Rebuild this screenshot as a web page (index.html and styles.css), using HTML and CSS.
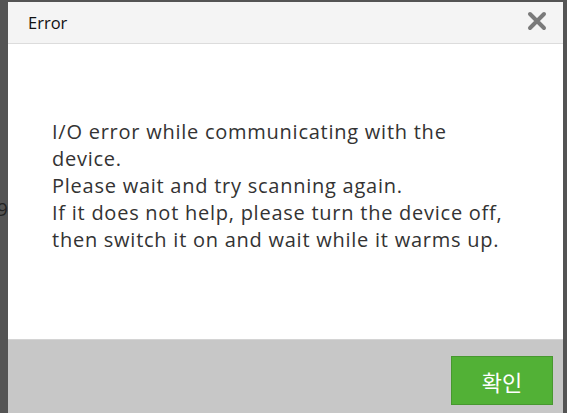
FILE: index.html
```html
<!DOCTYPE html>
<html>
<head>
<meta charset="utf-8">
<link rel="stylesheet" href="styles.css">
</head>
<body>
<div class="backdrop">
  <span class="behind">9</span>
  <div class="dialog">
    <div class="header">
      <span class="title">Error</span>
      <svg class="close" width="20" height="20" viewBox="0 0 20 20"><path d="M3 3 L17 17 M17 3 L3 17" stroke="#7a7a7a" stroke-width="4" stroke-linecap="round"/></svg>
    </div>
    <div class="content">
      <p class="msg">I/O error while communicating with the<br>device.<br>Please wait and try scanning again.<br>If it does not help, please turn the device off,<br>then switch it on and wait while it warms up.</p>
    </div>
    <div class="footer">
      <button class="ok">확인</button>
    </div>
  </div>
</div>
</body>
</html>
```
FILE: styles.css
```css
html, body {
  margin: 0;
  padding: 0;
  height: 100%;
  overflow: hidden;
}
body {
  background: #545454;
  font-family: "Open Sans", "Noto Sans CJK KR", sans-serif;
}
.backdrop {
  position: relative;
  height: 100%;
  padding: 2px 4px 0 8px;
  box-sizing: border-box;
}
.behind {
  position: absolute;
  left: -3px;
  top: 196px;
  font-size: 19px;
  color: #222;
}
.dialog {
  background: #fff;
  display: flex;
  flex-direction: column;
  height: 430px;
}
.header {
  height: 41px;
  background: #f4f4f4;
  border-bottom: 1px solid #dcdcdc;
  display: flex;
  align-items: center;
  justify-content: space-between;
  padding: 0 16px 0 20px;
}
.title {
  font-size: 16.5px;
  color: #111;
  margin-top: -1px;
}
.close {
  margin-top: -4px;
}
.content {
  height: 295px;
  padding: 0 0 0 44px;
  border-bottom: 1px solid #d4d4d4;
}
.msg {
  margin: 0;
  padding-top: 74px;
  font-size: 20px;
  letter-spacing: 0.75px;
  line-height: 27px;
  color: #333;
}
.footer {
  flex: 1;
  background: #c7c7c7;
  display: flex;
  justify-content: flex-end;
  align-items: flex-start;
  padding: 16px 10px 0 0;
}
.ok {
  width: 102px;
  height: 49px;
  background: #52b136;
  border: 1px solid #47982f;
  color: #fff;
  font-family: "Noto Sans CJK KR", sans-serif;
  font-size: 22px;
  padding: 0;
}
```
